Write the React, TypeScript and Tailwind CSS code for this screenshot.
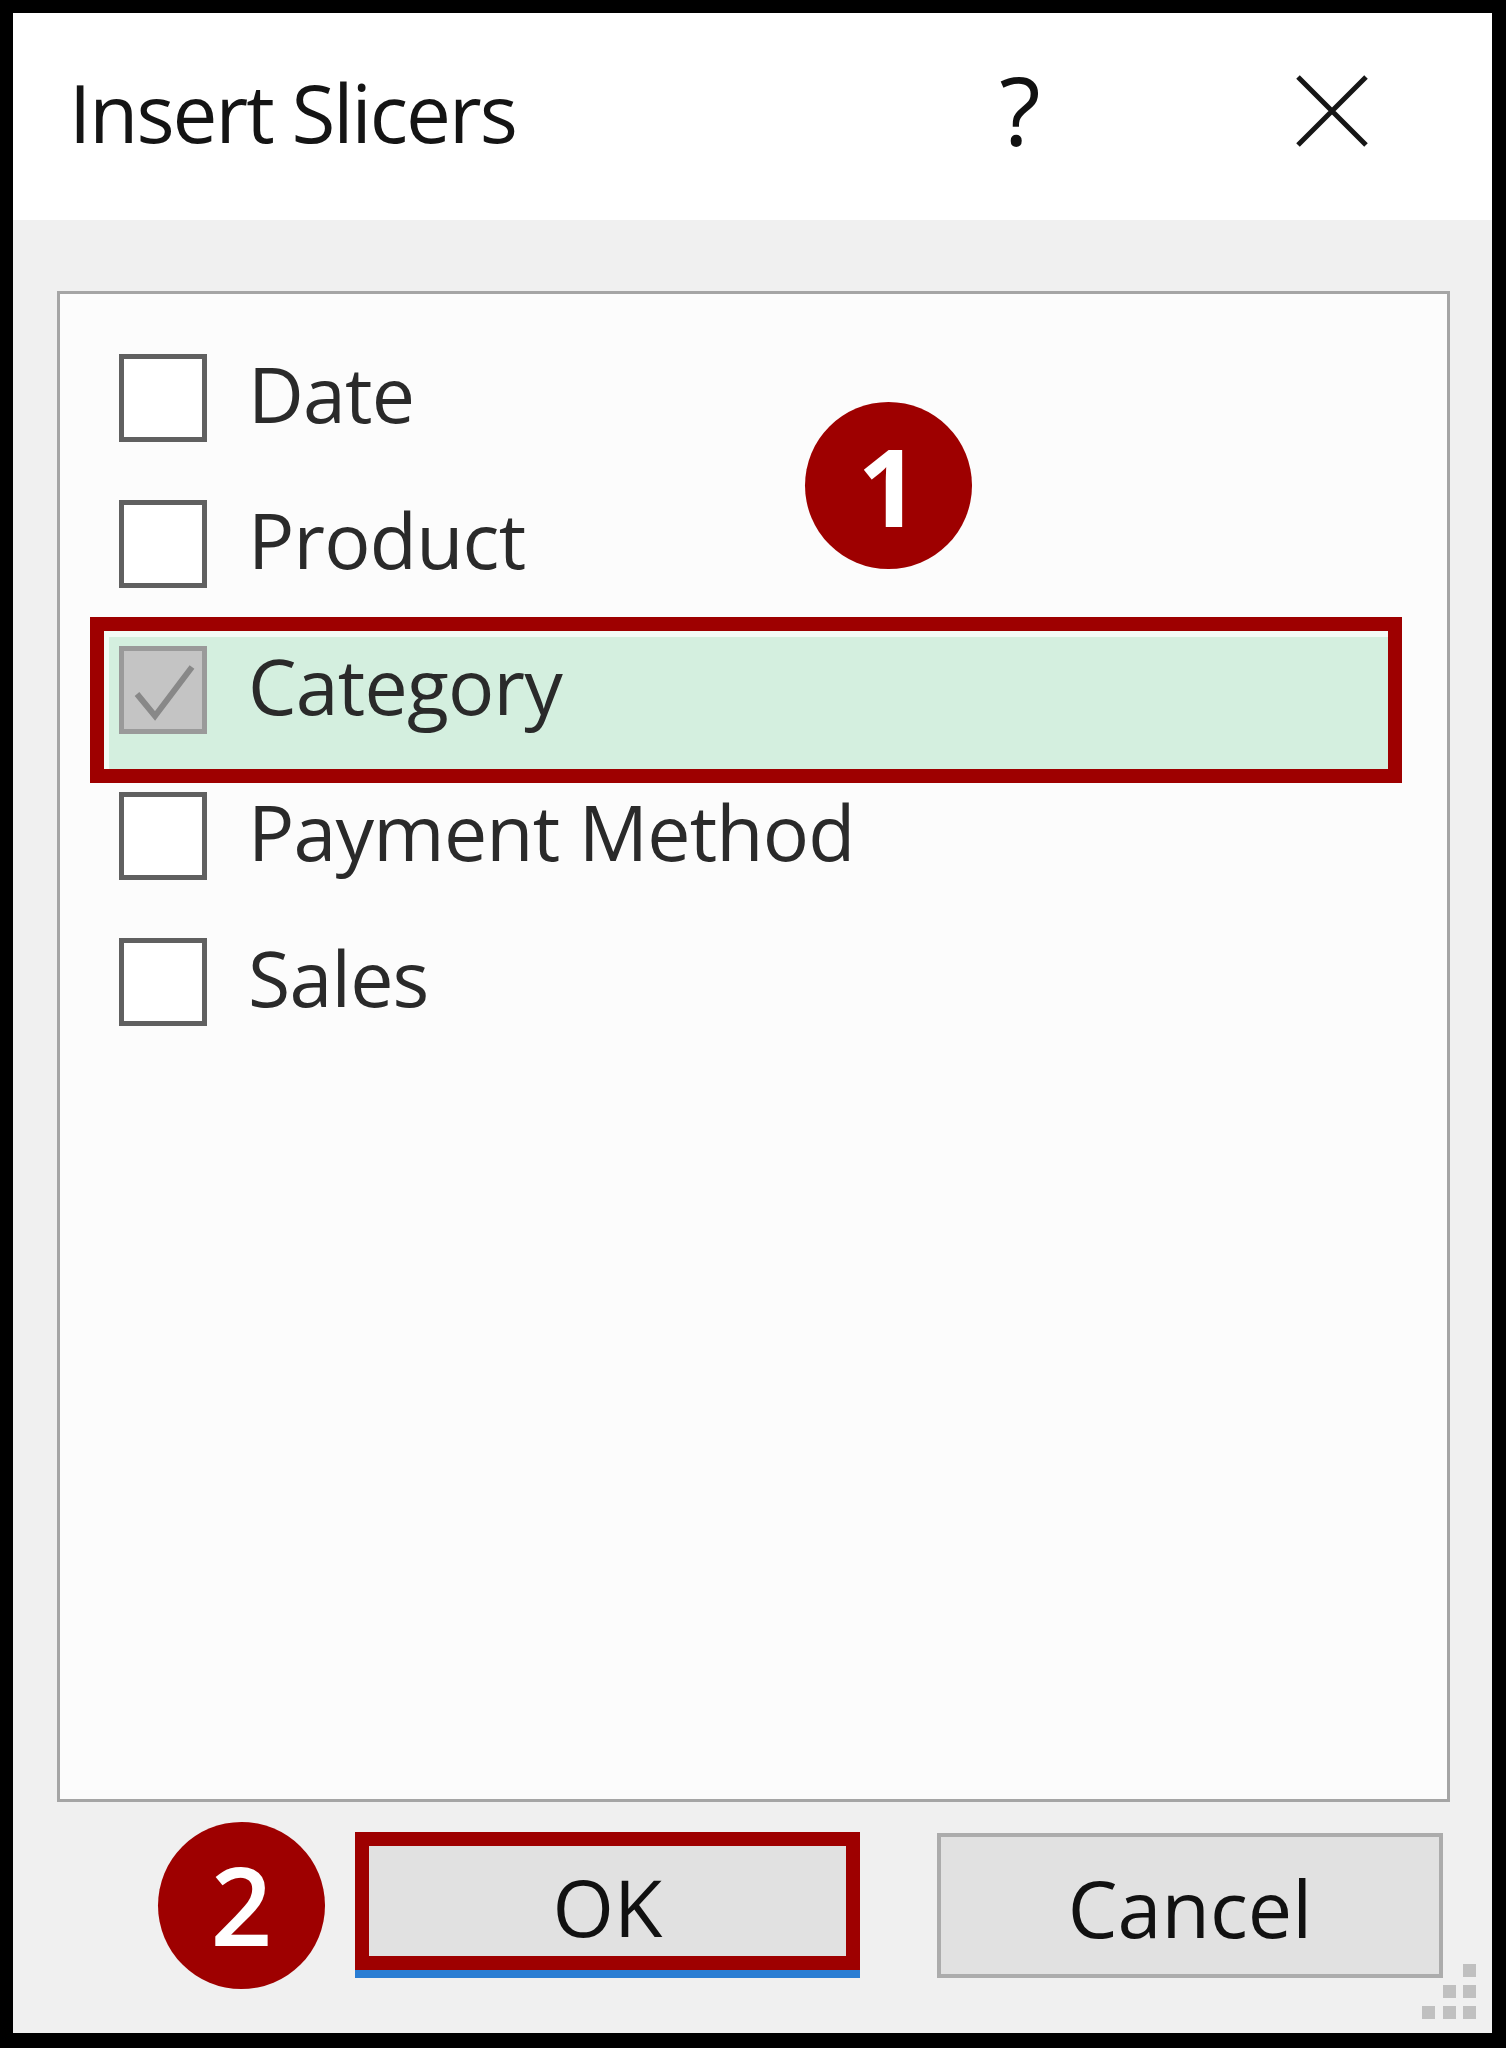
import type { ReactNode } from 'react';

const fields = ['Date', 'Product', 'Category', 'Payment Method', 'Sales'];

function Checkbox({ checked }: { checked?: boolean }) {
  if (checked) {
    return (
      <div className="h-[88px] w-[88px] shrink-0 border-[5px] border-[#9a9a9a] bg-[#c4c4c4]">
        <svg viewBox="0 0 78 78" className="h-full w-full">
          <polyline
            points="13,43 31,65 68,16"
            fill="none"
            stroke="#888888"
            strokeWidth="6"
            strokeLinejoin="miter"
          />
        </svg>
      </div>
    );
  }
  return <div className="h-[88px] w-[88px] shrink-0 border-[5px] border-[#606060] bg-white" />;
}

function Badge({ children, className }: { children: ReactNode; className?: string }) {
  return (
    <div
      className={`flex h-[167px] w-[167px] shrink-0 items-center justify-center rounded-full bg-[#9e0000] text-[108px] leading-none text-white ${className ?? ''}`}
    >
      {children}
    </div>
  );
}

function FieldRow({ label, checked }: { label: string; checked?: boolean }) {
  return (
    <div className="relative flex h-[146px] items-center pl-[59px]">
      {checked && (
        <div className="absolute left-[30px] top-0 h-[166px] w-[1312px] border-[14px] border-[#9e0000] bg-[#d4efdf] shadow-[inset_5px_6px_0_#f3fbf6]" />
      )}
      <div className="relative flex items-center gap-[41px]">
        <Checkbox checked={checked} />
        <span className="pb-[10px] text-[77px] leading-none tracking-[-0.01em] text-[#2a2a2a]">
          {label}
        </span>
      </div>
    </div>
  );
}

export default function App() {
  return (
    <div className="h-[2048px] w-[1506px] bg-black pb-[15px] pl-[13px] pr-[14px] pt-[13px] font-['Open_Sans','Noto_Sans',sans-serif]">
      <div className="relative flex h-full flex-col bg-[#f0f0f0]">
        {/* title bar */}
        <div className="flex h-[207px] shrink-0 items-center bg-white pl-[56px] pr-[123px]">
          <span className="pb-[10px] text-[80px] leading-none tracking-[-0.025em] text-[#141414]">
            Insert Slicers
          </span>
          <div className="flex-1" />
          <span className="w-[80px] pb-[16px] text-center text-[96px] leading-none text-[#111]">?</span>
          <svg viewBox="0 0 74 74" className="mb-[11px] ml-[235px] h-[74px] w-[74px]">
            <path d="M3 3 L71 71 M71 3 L3 71" stroke="#161616" strokeWidth="5" />
          </svg>
        </div>

        {/* field list */}
        <div className="relative ml-[44px] mt-[71px] h-[1511px] w-[1393px] border-[3px] border-[#a5a5a5] bg-[#fcfcfc] pt-[31px]">
          {fields.map((f) => (
            <FieldRow key={f} label={f} checked={f === 'Category'} />
          ))}
          <Badge className="absolute left-[745px] top-[108px] font-bold">1</Badge>
        </div>

        {/* buttons */}
        <div className="mt-[30px] flex h-[146px] items-center justify-end pr-[49px]">
          <Badge className="font-semibold">2</Badge>
          <div className="ml-[30px] flex h-[146px] w-[505px] flex-col bg-[#2a7dd3]">
            <div className="flex h-[138px] items-center justify-center border-[14px] border-[#9e0000] bg-[#e1e1e1] pt-[11px] text-[79px] leading-none text-[#111]">
              OK
            </div>
          </div>
          <div className="ml-[77px] flex h-[145px] w-[506px] items-center justify-center border-[4px] border-[#acacac] bg-[#e1e1e1] pt-[4px] text-[79px] leading-none text-[#111]">
            Cancel
          </div>
        </div>

        {/* resize grip */}
        <svg viewBox="0 0 58 58" className="absolute bottom-[13px] right-[14px] h-[58px] w-[58px]">
          <g fill="#c0c0c0">
            <rect x="43" y="2" width="13" height="13" />
            <rect x="23" y="23" width="13" height="13" />
            <rect x="43" y="23" width="13" height="13" />
            <rect x="2" y="44" width="13" height="13" />
            <rect x="23" y="44" width="13" height="13" />
            <rect x="43" y="44" width="13" height="13" />
          </g>
        </svg>
      </div>
    </div>
  );
}
